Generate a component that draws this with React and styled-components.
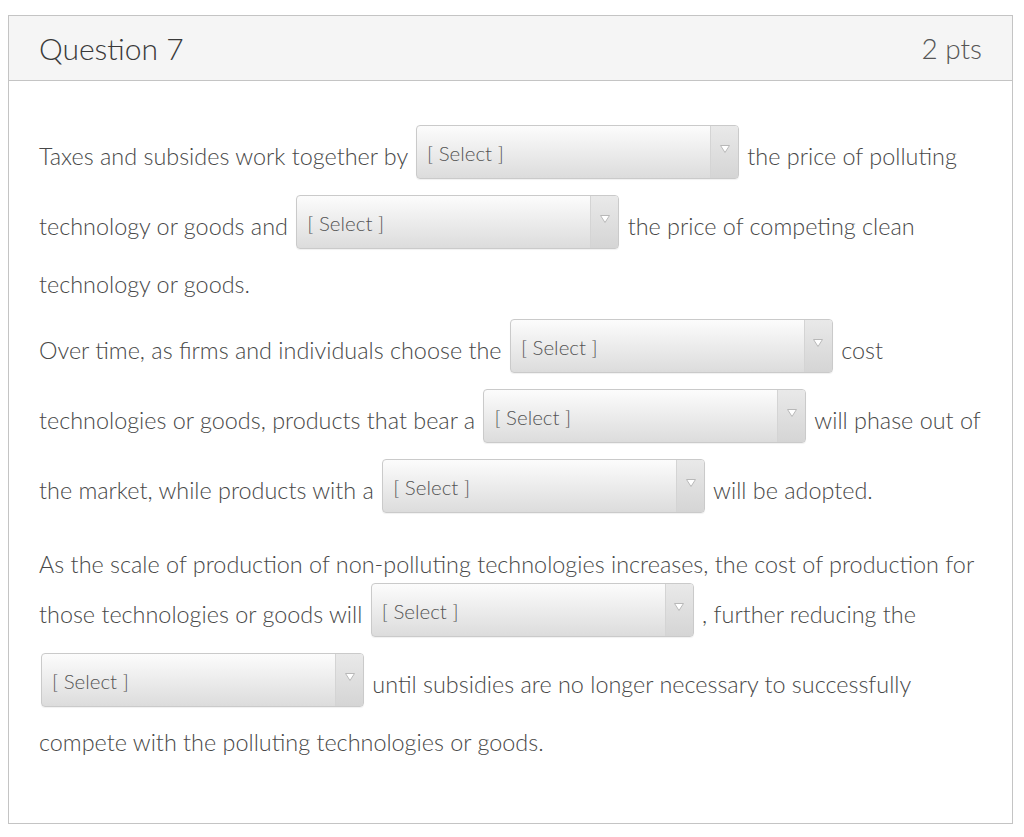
import React from "react";
import styled, { createGlobalStyle } from "styled-components";

const GlobalStyle = createGlobalStyle`
  html, body { margin: 0; padding: 0; background: #ffffff; }
  body { font-family: Lato, "Open Sans", sans-serif; }
`;

const Page = styled.div`
  padding: 15px 11px 12px 8px;
`;

const Card = styled.section`
  border: 1px solid #c4c4c4;
  background: #ffffff;
`;

const Header = styled.header`
  display: flex;
  justify-content: space-between;
  align-items: center;
  height: 64px;
  padding: 0 30px;
  background: #f5f5f5;
  border-bottom: 1px solid #c4c4c4;
`;

const Title = styled.h2`
  margin: 0;
  font-size: 30px;
  font-weight: 300;
  color: #3a3a3a;
`;

const Points = styled.span`
  font-size: 28px;
  font-weight: 300;
  color: #555555;
`;

const Body = styled.div`
  padding: 44px 20px 62px 30px;
`;

const Para = styled.p`
  margin: 0 0 16px;
  font-size: 23.4px;
  font-weight: 300;
  line-height: 38px;
  color: #484848;
  white-space: nowrap;
  &:last-child { margin-bottom: 0; }
`;

const SelectBox = styled.span`
  display: inline-flex;
  align-items: flex-start;
  box-sizing: border-box;
  width: 323px;
  height: 54px;
  margin: 0 2px 16px;
  vertical-align: 4px;
  border: 1px solid #cacaca;
  border-radius: 4px;
  background: linear-gradient(#fcfcfc, #dcdcdc);
  box-shadow: 0 1px 1px rgba(0, 0, 0, 0.06);
  overflow: hidden;
`;

const SelectLabel = styled.span`
  flex: 1;
  padding: 15px 0 0 10px;
  font-size: 20.5px;
  font-weight: 300;
  line-height: 24px;
  color: #555555;
`;

const Arrow = styled.span`
  display: flex;
  justify-content: center;
  align-self: stretch;
  width: 28px;
  padding-top: 18px;
  box-sizing: border-box;
  border-left: 1px solid #d4d4d4;
  background: linear-gradient(#e9e9e9, #d5d5d5);
`;

const Select = () => (
  <SelectBox>
    <SelectLabel>[ Select ]</SelectLabel>
    <Arrow>
      <svg width="12" height="10" viewBox="0 0 12 10">
        <path d="M1.5 1.5 L10.5 1.5 L6 8.5 Z" fill="#ffffff" stroke="#b8b8b8" strokeWidth="1" strokeLinejoin="round" />
      </svg>
    </Arrow>
  </SelectBox>
);

export default function App() {
  return (
    <>
      <GlobalStyle />
      <Page>
        <Card>
          <Header>
            <Title>Question 7</Title>
            <Points>2 pts</Points>
          </Header>
          <Body>
            <Para>
              Taxes and subsides work together by <Select /> the price of polluting
              <br />
              technology or goods and <Select /> the price of competing clean
              <br />
              technology or goods.
            </Para>
            <Para>
              Over time, as firms and individuals choose the <Select /> cost
              <br />
              technologies or goods, products that bear a <Select /> will phase out of
              <br />
              the market, while products with a <Select /> will be adopted.
            </Para>
            <Para>
              As the scale of production of non-polluting technologies increases, the cost of production for
              <br />
              those technologies or goods will <Select /> , further reducing the
              <br />
              <Select /> until subsidies are no longer necessary to successfully
              <br />
              compete with the polluting technologies or goods.
            </Para>
          </Body>
        </Card>
      </Page>
    </>
  );
}
